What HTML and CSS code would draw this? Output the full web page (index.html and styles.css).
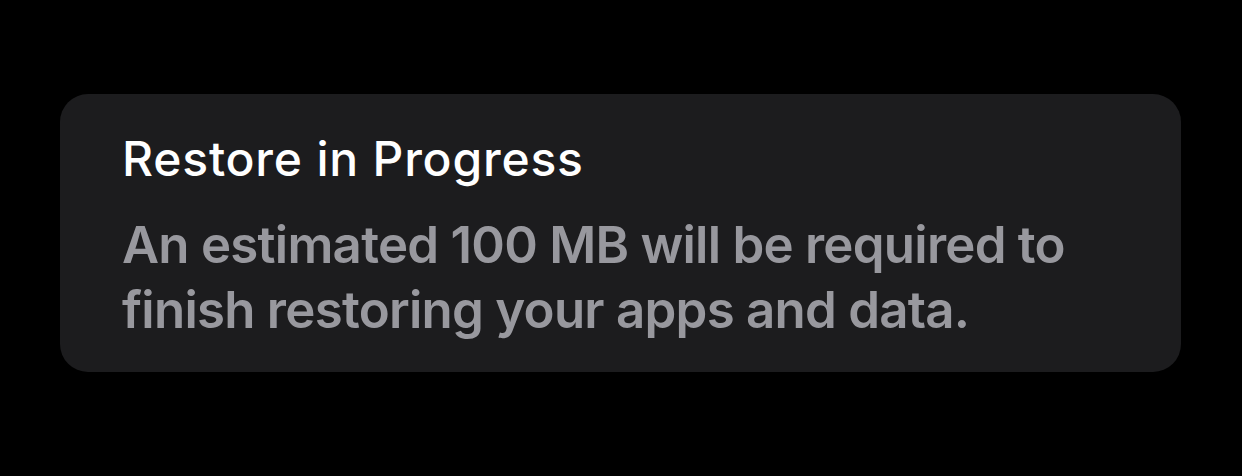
FILE: index.html
```html
<!DOCTYPE html>
<html lang="en">
<head>
  <meta charset="UTF-8">
  <meta name="viewport" content="width=device-width, initial-scale=1.0">
  <title>Restore in Progress</title>
  <link rel="stylesheet" href="styles.css">
</head>
<body>

  <div class="notice">
    <h2 class="notice-title">Restore in Progress</h2>
    <p class="notice-text">An estimated 100 MB will be required to<br>finish restoring your apps and data.</p>
  </div>

</body>
</html>
```

FILE: styles.css
```css
body {
  margin: 0;
  background-color: #000;
  font-family: Inter, "Noto Sans", sans-serif;
  padding: 94px 61px 0 60px;
}

.notice {
  background-color: #1c1c1e;
  border-radius: 28px;
  height: 278px;
  box-sizing: border-box;
  padding: 37px 62px 0 62px;
}

.notice-title {
  margin: 0;
  color: #fff;
  font-size: 48px;
  font-weight: 500;
  line-height: 56px;
  letter-spacing: 0.8px;
}

.notice-text {
  margin: 25px 0 0 0;
  color: #98989e;
  font-size: 51px;
  font-weight: 600;
  line-height: 65px;
  letter-spacing: -0.75px;
}
```
